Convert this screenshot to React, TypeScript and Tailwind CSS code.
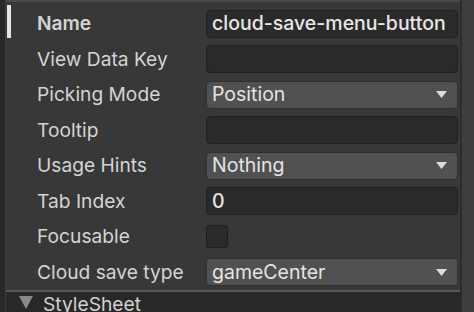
type Row =
    | { label: string; kind: 'text'; value: string; bold?: boolean }
    | { label: string; kind: 'select'; value: string }
    | { label: string; kind: 'check' };

const rows: Row[] = [
    { label: 'Name', kind: 'text', value: 'cloud-save-menu-button', bold: true },
    { label: 'View Data Key', kind: 'text', value: '' },
    { label: 'Picking Mode', kind: 'select', value: 'Position' },
    { label: 'Tooltip', kind: 'text', value: '' },
    { label: 'Usage Hints', kind: 'select', value: 'Nothing' },
    { label: 'Tab Index', kind: 'text', value: '0' },
    { label: 'Focusable', kind: 'check' },
    { label: 'Cloud save type', kind: 'select', value: 'gameCenter' },
];

function Field({ row }: { row: Row }) {
    if (row.kind === 'check') {
        return <div className="w-[22px] h-[23px] rounded-[3px] bg-[#2b2b2b] border border-[#1e1e1e]" />;
    }
    if (row.kind === 'select') {
        return (
            <div className="flex-1 h-[28px] flex items-center justify-between pl-[5px] pr-[10px] rounded-[4px] bg-[#515151] border border-[#303030] text-[#e4e4e4] text-[19.5px]">
                <span>{row.value}</span>
                <svg width="11" height="7" viewBox="0 0 11 7">
                    <path d="M0 0 H11 L5.5 7 Z" fill="#dcdcdc" />
                </svg>
            </div>
        );
    }
    return (
        <div className="flex-1 h-[28px] flex items-center pl-[5px] rounded-[4px] bg-[#2a2a2a] border border-[#1f1f1f] text-[#e6e6e6] text-[19.5px] font-medium">
            {row.value}
        </div>
    );
}

export default function App() {
    return (
        <div
            className="w-[474px] h-[312px] overflow-hidden flex bg-[#383838] text-[19.2px]"
            style={{ fontFamily: 'Inter, "Noto Sans", sans-serif' }}
        >
            {/* left gutter */}
            <div className="w-[6px] bg-[#282828] border-r border-[#3c3c3c]" />

            <div className="flex-1 flex flex-col border-t-2 border-[#4a4a4a]">
                <div className="flex-1 flex flex-col pt-[4px]">
                    {rows.map((row, i) => (
                        <div key={row.label} className="relative h-[35.5px] flex items-center pl-[31px] pr-[2px]">
                            {i === 0 && <div className="absolute left-[1px] top-[-1px] w-[4px] h-[33px] bg-[#e6e6e6]" />}
                            <div className={`w-[169px] whitespace-nowrap text-[#d4d4d4] ${row.kind === 'text' && row.bold ? 'font-semibold' : ''}`}>
                                {row.label}
                            </div>
                            <Field row={row} />
                        </div>
                    ))}
                </div>
                {/* foldout header */}
                <div className="h-[22px] flex items-center gap-[10px] pl-[13px] bg-[#282828] border-t-2 border-[#575757] text-[#d2d2d2]">
                    <svg width="14" height="13" viewBox="0 0 14 13">
                        <path d="M0 0 H14 L7 13 Z" fill="#8a8a8a" />
                    </svg>
                    <span className="mt-[4px] whitespace-nowrap">StyleSheet</span>
                </div>
            </div>

            {/* right gutter */}
            <div className="w-[14px] bg-[#3e3e3e] border-l-2 border-[#2c2c2c]" />
        </div>
    );
}
